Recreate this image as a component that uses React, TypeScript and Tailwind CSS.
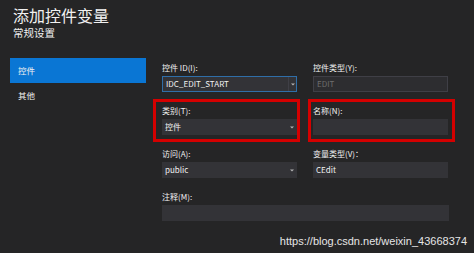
import React from "react";

const cjk = { fontFamily: '"Noto Sans CJK SC", "Noto Sans", sans-serif' };

function Arrow() {
  return (
    <svg width="4" height="3" viewBox="0 0 4 3" className="shrink-0">
      <path d="M0 0.5h4L2 2.5z" fill="#b4b4b4" />
    </svg>
  );
}

function Field({
  label,
  children,
  red,
  side,
}: {
  label: string;
  children: React.ReactNode;
  red?: boolean;
  side: "l" | "r";
}) {
  return (
    <div
      className={`h-[43px] border-[3px] ${red ? "border-[#d40000]" : "border-transparent"} ${
        side === "l" ? "pl-[6px] pr-0" : "pl-[2px] pr-[4px]"
      } pt-[3px]`}
    >
      <div className="h-[12px] text-[8px] leading-[12px] text-[#f1f1f1]">{label}</div>
      <div className="mt-[2px] h-[16px]">{children}</div>
    </div>
  );
}

export default function App() {
  return (
    <div className="relative h-[253px] w-[474px] overflow-hidden bg-[#252526] text-[#f1f1f1]" style={cjk}>
      <div className="pl-[13px] pt-[6px]">
        <div className="text-[16px] leading-[19px]">添加控件变量</div>
        <div className="mt-[1px] text-[10.5px] leading-[13px]">常规设置</div>
      </div>

      <div className="mt-[19px] flex">
        {/* sidebar */}
        <div className="w-[153px] pl-[10px] pr-[7px]">
          <div className="flex h-[25px] items-center bg-[#0a76d4] pl-[8px] text-[8.5px]">控件</div>
          <div className="flex h-[25px] items-center pl-[8px] text-[8.5px]">其他</div>
        </div>

        {/* form */}
        <div className="-mt-[2px] w-[302px]">
          <div className="grid grid-cols-[147px_147px] gap-x-[8px]">
            <Field label="控件 ID(I):" side="l">
              <div className="flex h-full border border-[#2f6ea8] bg-[#333337]">
                <div className="flex flex-1 items-center pl-[3px] text-[8px]">IDC_EDIT_START</div>
                <div className="flex w-[8px] items-center justify-center border-l border-[#3f3f46]">
                  <Arrow />
                </div>
              </div>
            </Field>
            <Field label="控件类型(Y):" side="r">
              <div className="flex h-full items-center border border-[#3f3f46] bg-[#2d2d30] pl-[3px] text-[8px] text-[#6d6d6d]">
                EDIT
              </div>
            </Field>

            <Field label="类别(T):" red side="l">
              <div className="flex h-full items-center justify-between bg-[#333337] pl-[3px] pr-[3px] text-[8px]">
                <span>控件</span>
                <Arrow />
              </div>
            </Field>
            <Field label="名称(N):" red side="r">
              <div className="h-full bg-[#333337]" />
            </Field>

            <Field label="访问(A):" side="l">
              <div className="flex h-full items-center justify-between bg-[#333337] pl-[3px] pr-[3px] text-[8px]">
                <span>public</span>
                <Arrow />
              </div>
            </Field>
            <Field label="变量类型(V)：" side="r">
              <div className="flex h-full items-center bg-[#333337] pl-[3px] text-[8px]">CEdit</div>
            </Field>
          </div>

          <div className="w-[299px]">
            <Field label="注释(M):" side="l">
              <div className="h-full bg-[#333337]" />
            </Field>
          </div>
        </div>
      </div>

      <div
        className="absolute bottom-[5px] right-[7px] text-[11px] leading-[14px] text-[#e6e6e6]"
        style={{ fontFamily: '"Liberation Sans", Arial, sans-serif' }}
      >
        https://blog.csdn.net/weixin_43668374
      </div>
    </div>
  );
}
